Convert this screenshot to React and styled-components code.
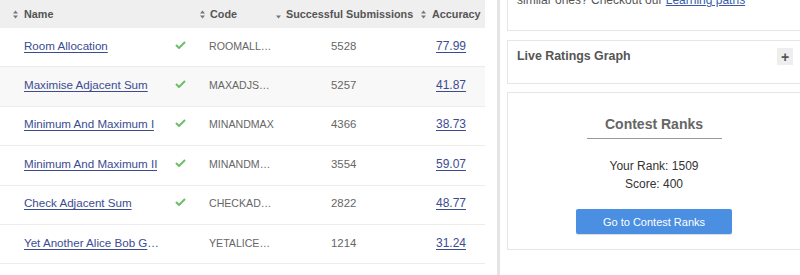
import React from "react";
import styled, { createGlobalStyle } from "styled-components";

const GlobalStyle = createGlobalStyle`
  html, body {
    margin: 0;
    padding: 0;
    background: #ffffff;
    font-family: "Liberation Sans", Arial, sans-serif;
    overflow: hidden;
  }
`;

const Page = styled.div`
  display: flex;
  width: 800px;
  height: 275px;
  overflow: hidden;
`;

const LeftPane = styled.div`
  width: 485px;
  padding-right: 12px;
  flex-shrink: 0;
`;

const Divider = styled.div`
  width: 3px;
  flex-shrink: 0;
  background: #e4e4e4;
`;

const RightPane = styled.div`
  width: 294px;
  flex-shrink: 0;
  padding-left: 7px;
  display: flex;
  flex-direction: column;
`;

const Grid = styled.div`
  display: grid;
  grid-template-columns: 171px 29px 74px 146px 65px;
  align-items: center;
`;

const HeadRow = styled(Grid)`
  height: 28px;
  background: #efefef;
`;

const HeadCell = styled.div`
  display: flex;
  align-items: center;
  gap: ${(p) => p.$gap || 6}px;
  padding-left: ${(p) => p.$pad || 0}px;
  font-size: 10.8px;
  font-weight: bold;
  color: #555555;
  white-space: nowrap;
`;

const Row = styled(Grid)`
  height: 39.4px;
  box-sizing: border-box;
  border-bottom: 1px solid #ececec;
  background: ${(p) => (p.$shade ? "#f8f8f8" : "#ffffff")};
  padding-bottom: 3px;
`;

const NameCell = styled.div`
  padding-left: 24px;
  display: flex;
  align-items: center;
`;

const ProblemLink = styled.a`
  max-width: 136px;
  overflow: hidden;
  white-space: nowrap;
  text-overflow: ellipsis;
  font-size: 11.6px;
  line-height: 16px;
  color: #3b4c92;
  text-decoration: underline;
  text-underline-offset: 2px;
`;

const CheckCell = styled.div`
  padding-left: 4px;
  display: flex;
  align-items: center;
  margin-top: -2px;
`;

const CodeCell = styled.div`
  padding-left: 9px;
  display: flex;
`;

const CodeText = styled.span`
  max-width: 66px;
  font-size: 10.6px;
  color: #666666;
  white-space: nowrap;
  overflow: hidden;
  text-overflow: ellipsis;
`;

const NumCell = styled.div`
  padding-left: ${(p) => p.$pad}px;
  font-size: 11.4px;
  color: #666666;
`;

const AccLink = styled.a`
  font-size: 12px;
  color: #3b4c92;
  text-decoration: underline;
  text-underline-offset: 2px;
`;

const Box = styled.div`
  border: 1px solid #e6e6e6;
  box-sizing: border-box;
  background: #ffffff;
`;

const IntroBox = styled(Box)`
  margin-top: -13px;
  height: 44px;
  padding: 4px 9px 0;
  font-size: 12px;
  line-height: 16px;
  color: #555555;
  white-space: nowrap;
`;

const PlainLink = styled.a`
  color: #3a5ba8;
  text-decoration: underline;
`;

const GraphBox = styled(Box)`
  margin-top: 9px;
  height: 44px;
  padding: 7px 8px 0 9px;
  display: flex;
  align-items: flex-start;
  justify-content: space-between;
`;

const BoxTitle = styled.div`
  font-size: 12.4px;
  line-height: 17px;
  font-weight: bold;
  color: #555555;
`;

const PlusButton = styled.div`
  width: 16px;
  height: 17px;
  margin-right: -1px;
  background: #eeeeee;
  color: #555555;
  font-size: 14px;
  font-weight: bold;
  display: flex;
  align-items: center;
  justify-content: center;
  line-height: 1;
`;

const RankBox = styled(Box)`
  margin-top: 8px;
  height: 158px;
  display: flex;
  flex-direction: column;
  align-items: center;
  padding-top: 23px;
`;

const RankTitle = styled.div`
  width: 135px;
  text-align: center;
  font-size: 14px;
  font-weight: bold;
  color: #666666;
  padding-bottom: 6px;
  border-bottom: 1px solid #999999;
`;

const Stat = styled.div`
  font-size: 12px;
  color: #333333;
  line-height: 18px;
  margin-top: ${(p) => p.$top || 0}px;
`;

const RankButton = styled.button`
  margin-top: 16px;
  width: 156px;
  height: 25px;
  border: none;
  border-radius: 2px;
  background: #4a8fe2;
  color: #ffffff;
  font-family: "Liberation Sans", Arial, sans-serif;
  font-size: 11px;
  box-shadow: 0 1px 1px rgba(0, 0, 0, 0.15);
`;

function SortIcon({ dir }) {
  return (
    <svg width="5" height="9" viewBox="0 0 5 9">
      {dir !== "desc" && <path d="M0 3.5 L2.5 0.5 L5 3.5 Z" fill="#777" />}
      <path d="M0 5.5 L2.5 8.5 L5 5.5 Z" fill="#777" />
    </svg>
  );
}

function Check() {
  return (
    <svg width="11" height="8" viewBox="0 0 11 8">
      <path
        d="M1 4 L4 7 L10 1"
        fill="none"
        stroke="#6cbd6c"
        strokeWidth="2"
      />
    </svg>
  );
}

const problems = [
  { name: "Room Allocation", code: "ROOMALLOCATION", subs: 5528, acc: "77.99", solved: true },
  { name: "Maximise Adjacent Sum", code: "MAXADJSUM", subs: 5257, acc: "41.87", solved: true },
  { name: "Minimum And Maximum I", code: "MINANDMAX", subs: 4366, acc: "38.73", solved: true },
  { name: "Minimum And Maximum II", code: "MINANDMAX2", subs: 3554, acc: "59.07", solved: true },
  { name: "Check Adjacent Sum", code: "CHECKADJSUM", subs: 2822, acc: "48.77", solved: true },
  { name: "Yet Another Alice Bob Game", code: "YETALICEBOB", subs: 1214, acc: "31.24", solved: false },
];

export default function App() {
  return (
    <Page>
      <GlobalStyle />
      <LeftPane>
        <HeadRow>
          <HeadCell $pad={13}>
            <SortIcon />
            Name
          </HeadCell>
          <div />
          <HeadCell $gap={5}>
            <SortIcon />
            Code
          </HeadCell>
          <HeadCell $pad={2} $gap={5}>
            <SortIcon dir="desc" />
            Successful Submissions
          </HeadCell>
          <HeadCell $pad={1} $gap={6}>
            <SortIcon />
            Accuracy
          </HeadCell>
        </HeadRow>
        {problems.map((p, i) => (
          <Row key={p.code} $shade={i === 1}>
            <NameCell>
              <ProblemLink href="#">{p.name}</ProblemLink>
            </NameCell>
            <CheckCell>{p.solved && <Check />}</CheckCell>
            <CodeCell>
              <CodeText>{p.code}</CodeText>
            </CodeCell>
            <NumCell $pad={57}>{p.subs}</NumCell>
            <NumCell $pad={16}>
              <AccLink href="#">{p.acc}</AccLink>
            </NumCell>
          </Row>
        ))}
      </LeftPane>
      <Divider />
      <RightPane>
        <IntroBox>
          similar ones? Checkout our <PlainLink href="#">Learning paths</PlainLink>
        </IntroBox>
        <GraphBox>
          <BoxTitle>Live Ratings Graph</BoxTitle>
          <PlusButton>+</PlusButton>
        </GraphBox>
        <RankBox>
          <RankTitle>Contest Ranks</RankTitle>
          <Stat $top={18}>Your Rank: 1509</Stat>
          <Stat>Score: 400</Stat>
          <RankButton>Go to Contest Ranks</RankButton>
        </RankBox>
      </RightPane>
    </Page>
  );
}
